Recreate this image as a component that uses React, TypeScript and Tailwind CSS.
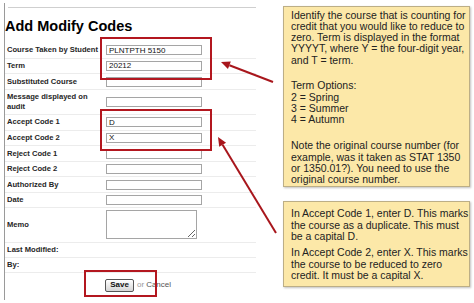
import React from 'react';

const rows: { label: string[]; value?: string; h: string; kind?: 'input' | 'memo' | 'none' }[] = [
  { label: ['Course Taken by Student'], value: 'PLNTPTH 5150', h: 'h-[15.5px]' },
  { label: ['Term'], value: '20212', h: 'h-[15.5px]' },
  { label: ['Substituted Course'], value: '', h: 'h-[16px]' },
  { label: ['Message displayed on', 'audit'], value: '', h: 'h-[25px]' },
  { label: ['Accept Code 1'], value: 'D', h: 'h-[15.7px]' },
  { label: ['Accept Code 2'], value: 'X', h: 'h-[15.5px]' },
  { label: ['Reject Code 1'], value: '', h: 'h-[15.8px]' },
  { label: ['Reject Code 2'], value: '', h: 'h-[15.5px]' },
  { label: ['Authorized By'], value: '', h: 'h-[15.5px]' },
  { label: ['Date'], value: '', h: 'h-[15px]' },
  { label: ['Memo'], h: 'h-[35px]', kind: 'memo' },
  { label: ['Last Modified:'], h: 'h-[15px]', kind: 'none' },
  { label: ['By:'], h: 'h-[15px]', kind: 'none' },
];

const box1 = [
  ['Identify the course that is counting for', 'credit that you would like to reduce to', 'zero. Term is displayed in the format', 'YYYYT, where Y = the four-digit year,', 'and T = term.'],
  ['Term Options:', '2 = Spring', '3 = Summer', '4 = Autumn'],
  ['Note the original course number (for', 'example, was it taken as STAT 1350', 'or 1350.01?). You need to use the', 'original course number.'],
];

const box2 = [
  ['In Accept Code 1, enter D. This marks', 'the course as a duplicate. This must', 'be a capital D.'],
  ['In Accept Code 2, enter X. This marks', 'the course to be reduced to zero', 'credit. It must be a capital X.'],
];

const Lines = ({ lines }: { lines: string[] }) => (
  <div>
    {lines.map((l) => (
      <div key={l} className="whitespace-nowrap leading-[11.3px]">{l}</div>
    ))}
  </div>
);

export default function App() {
  return (
    <div className="relative w-[474px] h-[303px] bg-white overflow-hidden flex font-['Liberation_Sans',Arial,sans-serif] text-[#1f1f1f]">
      {/* form panel */}
      <div className="ml-[4px] mt-[3px] h-[297px] w-[252px] border-l border-[#9a9a9a] flex flex-col">
        <div className="mt-[4px] ml-[3px] h-px bg-[#cfcfcf]" />
        <h1 className="mt-[10px] text-[14.5px] leading-[16px] font-bold text-black">Add Modify Codes</h1>
        <div className="mt-[9px] flex flex-col">
          {rows.map((r) => (
            <div key={r.label[0]} className={`${r.h} flex items-center border-b border-[#ececec]`}>
              <div className="w-[101px] pl-[2px] text-[7.6px] leading-[10px] font-bold text-[#262626]">
                {r.label.map((l) => (
                  <div key={l} className="whitespace-nowrap">{l}</div>
                ))}
              </div>
              {r.kind === 'memo' ? (
                <textarea
                  title="memo"
                  readOnly
                  className="w-[91px] h-[29px] border border-[#a5a5a5] bg-white p-0"
                />
              ) : r.kind === 'none' ? null : (
                <input
                  title={r.label[0]}
                  readOnly
                  value={r.value}
                  className="w-[96px] h-[10px] border border-[#a5a5a5] bg-white px-[2px] py-0 text-[8px] leading-[8px] text-[#111] outline-none"
                />
              )}
            </div>
          ))}
          <div className="flex items-center pt-[6px] pl-[100px]">
            <button className="w-[29px] h-[13px] border border-[#555] rounded-[2px] bg-linear-to-b from-white to-[#d6d6d6] text-[8px] leading-[8px] font-bold text-[#111]">
              Save
            </button>
            <span className="ml-[3px] text-[8px] text-[#999]">or</span>
            <span className="ml-[2px] text-[8px] text-[#555]">Cancel</span>
          </div>
        </div>
      </div>

      {/* note boxes */}
      <div className="ml-[27px] w-[187px] flex flex-col text-[10.5px] text-[#222]">
        <div className="mt-[6px] bg-[#fce8a8] border border-[#bcae86] shadow-[1px_1px_2px_rgba(0,0,0,0.25)] pl-[7px] pt-[2.5px] pb-[0.5px]">
          <Lines lines={box1[0]} />
          <div className="mt-[14.3px]"><Lines lines={box1[1]} /></div>
          <div className="mt-[14.8px]"><Lines lines={box1[2]} /></div>
        </div>
        <div className="mt-[14.5px] bg-[#fce8a8] border border-[#bcae86] shadow-[1px_1px_2px_rgba(0,0,0,0.25)] pl-[7px] pt-[6px] pb-[5px]">
          <Lines lines={box2[0]} />
          <div className="mt-[5px]"><Lines lines={box2[1]} /></div>
        </div>
      </div>

      {/* highlight boxes */}
      <div className="absolute left-[100px] top-[37px] w-[112px] h-[43px] border-2 border-[#b3171f]" />
      <div className="absolute left-[100px] top-[109px] w-[112px] h-[42px] border-2 border-[#b3171f]" />
      <div className="absolute left-[84px] top-[270px] w-[73px] h-[27px] border-2 border-[#b3171f]" />

      {/* arrows */}
      <svg className="absolute inset-0 pointer-events-none" width="474" height="303" viewBox="0 0 474 303">
        <line x1="273" y1="82" x2="229.4" y2="65.2" stroke="#a8161c" strokeWidth="2" />
        <polygon points="221,62 230.84,61.5 227.96,68.96" fill="#a8161c" />
        <line x1="276" y1="233" x2="222.6" y2="144.7" stroke="#a8161c" strokeWidth="2" />
        <polygon points="218,137 226.07,142.63 219.23,146.77" fill="#a8161c" />
      </svg>
    </div>
  );
}
